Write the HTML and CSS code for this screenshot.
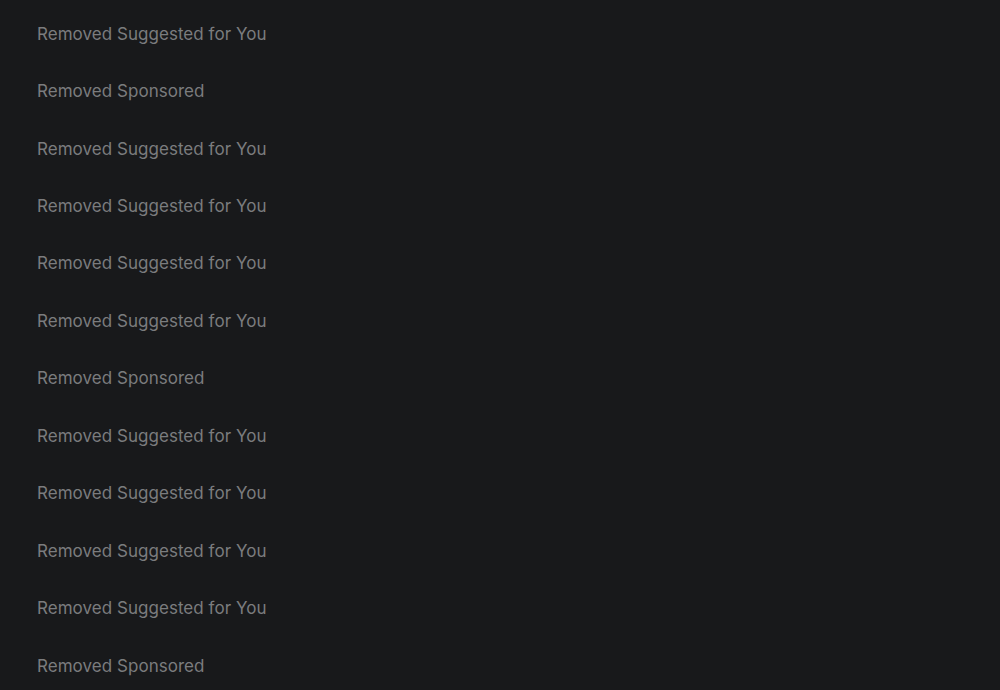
FILE: index.html
```html
<!DOCTYPE html>
<html>
<head>
<meta charset="utf-8">
<link rel="stylesheet" href="styles.css">
</head>
<body>
<div class="list">
  <div class="row">Removed Suggested for You</div>
  <div class="row">Removed Sponsored</div>
  <div class="row">Removed Suggested for You</div>
  <div class="row">Removed Suggested for You</div>
  <div class="row">Removed Suggested for You</div>
  <div class="row">Removed Suggested for You</div>
  <div class="row">Removed Sponsored</div>
  <div class="row">Removed Suggested for You</div>
  <div class="row">Removed Suggested for You</div>
  <div class="row">Removed Suggested for You</div>
  <div class="row">Removed Suggested for You</div>
  <div class="row">Removed Sponsored</div>
</div>
</body>
</html>
```
FILE: styles.css
```css
html, body {
  margin: 0;
  padding: 0;
  background: #18191b;
  height: 100%;
  overflow: hidden;
}
.list {
  padding-top: 5px;
  padding-left: 37px;
  display: flex;
  flex-direction: column;
}
.row {
  height: 57.45px;
  display: flex;
  align-items: center;
  font-family: Inter, "Noto Sans", sans-serif;
  font-size: 17px;
  letter-spacing: 0.04px;
  color: #7b7c7e;
}
```
